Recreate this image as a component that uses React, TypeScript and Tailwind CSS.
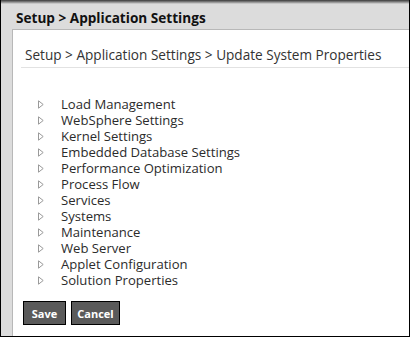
import React from "react";

const items = [
  "Load Management",
  "WebSphere Settings",
  "Kernel Settings",
  "Embedded Database Settings",
  "Performance Optimization",
  "Process Flow",
  "Services",
  "Systems",
  "Maintenance",
  "Web Server",
  "Applet Configuration",
  "Solution Properties",
];

function Tri() {
  return (
    <svg width="6" height="9" viewBox="0 0 6 9" className="shrink-0">
      <path d="M0.5 0.8 L5.2 4.5 L0.5 8.2 Z" fill="none" stroke="#9a9a9a" strokeWidth="1" />
    </svg>
  );
}

export default function App() {
  return (
    <div
      className="w-[410px] h-[337px] bg-[#dcdcdc] border-x border-b border-black flex flex-col overflow-hidden relative"
      style={{ fontFamily: '"Open Sans", "DejaVu Sans", sans-serif' }}
    >
      <div className="absolute top-0 left-0 right-0 h-[4px] bg-gradient-to-b from-[#3a3a3a] to-[#dcdcdc]" />
      <div className="h-[29px] shrink-0 flex items-end pb-[3px] pl-[15px] text-[13.6px] leading-[16px] font-bold text-[#111]">
        Setup &gt; Application Settings
      </div>
      <div className="flex-1 ml-[11px] bg-white border-l border-t border-[#b8b8b8] flex flex-col">
        <div className="ml-[8px] h-[38px] shrink-0 border-b border-[#e2e2e2] flex items-center pl-[4px] text-[13.6px] leading-[16px] text-[#333] pt-[12px]">
          Setup &gt; Application Settings &gt; Update System Properties
        </div>
        <div className="pt-[28px] pl-[25px] flex flex-col">
          {items.map((t) => (
            <div key={t} className="h-[16px] flex items-center text-[13.1px] text-[#2b2b2b] leading-[16px]">
              <Tri />
              <span className="ml-[17px]">{t}</span>
            </div>
          ))}
        </div>
        <div className="flex gap-[5px] pl-[10px] mt-[13px]">
          <button className="h-[24px] w-[43px] bg-[#5a5a5a] border border-black text-white text-[11px] font-bold leading-none">
            Save
          </button>
          <button className="h-[24px] w-[49px] bg-[#5a5a5a] border border-black text-white text-[11px] font-bold leading-none">
            Cancel
          </button>
        </div>
      </div>
    </div>
  );
}
